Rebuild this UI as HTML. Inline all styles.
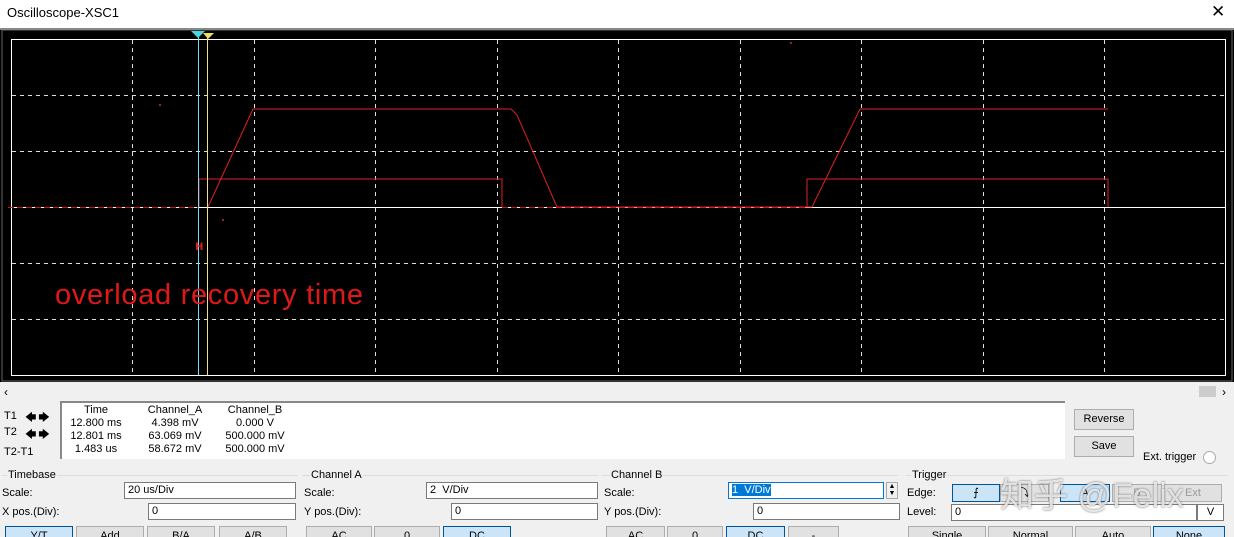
<!DOCTYPE html>
<html style="overflow:hidden;width:1234px;height:537px"><head><style>
body{margin:0;width:1234px;height:537px;background:#f0f0f0;font-family:"Liberation Sans",sans-serif;font-size:11px;color:#000;position:relative;overflow:hidden}
.a{position:absolute}
.in{position:absolute;background:#fff;border:1px solid #7a7a7a;height:17px;box-sizing:border-box;padding:1px 3px;font-size:11px}
.bt{position:absolute;background:#e1e1e1;border:1px solid #adadad;box-sizing:border-box;text-align:center;font-size:11px;line-height:18px}
.sel{background:#cce4f7;border-color:#005499}
.grp{position:absolute;border-top:1px solid #dcdcdc}
</style></head><body>
<div class="a" style="left:0;top:0;width:1234px;height:28px;background:#fff"></div>
<div class="a" style="left:7px;top:5px;font-size:13px">Oscilloscope-XSC1</div>
<div class="a" style="left:1211px;top:2px;font-size:17px">✕</div>
<div class="a" style="left:0;top:28px;width:1234px;height:2px;background:#888"></div>
<svg class="a" style="left:0;top:30px" width="1234" height="352">
<rect x="0" y="0" width="1234" height="352" fill="#000"/>
<rect x="2" y="0" width="1230" height="351" fill="none" stroke="#666"/>
<g transform="translate(0,-30)">
<rect x="11.5" y="39.5" width="1214" height="336" fill="none" stroke="#fff"/>
<g stroke="#ddd" stroke-dasharray="4,4" stroke-width="1">
<path d="M132.5 40V375M254.5 40V375M375.5 40V375M497.5 40V375M618.5 40V375M740.5 40V375M861.5 40V375M983.5 40V375M1104.5 40V375"/>
<path d="M12 95.5H1225M12 151.5H1225M12 263.5H1225M12 319.5H1225"/>
</g>
<path d="M12 207.5H1225" stroke="#fff"/>
<g stroke="#ff0000" stroke-width="1" fill="none">
<path d="M8 207.5H199M502 207.5H807" stroke="#d01010" stroke-dasharray="6,3"/>
<path d="M199 207V179H502V207M807 207V179H1108V207" stroke="#e02020"/>
<path d="M208 207L253 109H511L517 115L557 207H812L860 109H1108" stroke="#e02020"/>
</g>
<line x1="198.5" y1="36" x2="198.5" y2="375" stroke="#6ee0f0"/>
<line x1="207.5" y1="36" x2="207.5" y2="375" stroke="#f0e080"/>
<path d="M191 31H205L198 38Z" fill="#4cd4e0"/>
<path d="M203 33H214L208 39Z" fill="#f0e060"/>
<circle cx="160" cy="105" r="1" fill="#c03030"/>
<circle cx="791" cy="43" r="1" fill="#c03030"/>
<circle cx="223" cy="220" r="1" fill="#c03030"/>
<text x="195" y="250" fill="#e02020" font-size="14" font-weight="bold" font-family="Liberation Sans">ʜ</text>
<text x="55" y="304" fill="#e01818" font-size="29" textLength="308" font-family="Liberation Sans">overload recovery time</text>
</g>
</svg>
<div class="a" style="left:4px;top:385px;font-size:12px">‹</div>
<div class="a" style="left:1199px;top:386px;width:17px;height:11px;background:#cdcdcd"></div>
<div class="a" style="left:1222px;top:385px;font-size:12px">›</div>
<div class="a" style="left:4px;top:410px">T1</div><div class="a" style="left:4px;top:426px">T2</div><div class="a" style="left:4px;top:446px">T2-T1</div>
<div class="a" style="left:25px;top:409px;font-size:11px;letter-spacing:2px">🡄🡆</div>
<div class="a" style="left:25px;top:426px;font-size:11px;letter-spacing:2px">🡄🡆</div>
<div class="a" style="left:60px;top:401px;width:1005px;height:58px;background:#fff;border-top:2px solid #888;border-left:2px solid #888;box-sizing:border-box"></div>
<div class="a" style="left:68px;top:404px;line-height:13px;text-align:center;width:56px">Time<br>12.800 ms<br>12.801 ms<br>1.483 us</div>
<div class="a" style="left:143px;top:404px;line-height:13px;text-align:center;width:64px">Channel_A<br>4.398 mV<br>63.069 mV<br>58.672 mV</div>
<div class="a" style="left:222px;top:404px;line-height:13px;text-align:center;width:66px">Channel_B<br>0.000 V<br>500.000 mV<br>500.000 mV</div>
<div class="bt" style="left:1074px;top:409px;width:60px;height:21px;line-height:19px">Reverse</div>
<div class="bt" style="left:1074px;top:436px;width:60px;height:21px;line-height:19px">Save</div>
<div class="a" style="left:1143px;top:451px">Ext. trigger</div>
<div class="a" style="left:1203px;top:451px;width:11px;height:11px;border:1px solid #aaa;border-radius:50%;background:#fff"></div>
<div class="grp" style="left:2px;top:475px;width:296px"></div><div class="a" style="left:7px;top:469px;background:#f0f0f0;padding:0 1px">Timebase</div>
<div class="a" style="left:2px;top:487px">Scale:</div><div class="in" style="left:124px;top:482px;width:172px">20 us/Div</div>
<div class="a" style="left:2px;top:506px">X pos.(Div):</div><div class="in" style="left:148px;top:503px;width:148px">0</div>
<div class="bt sel" style="left:5px;top:526px;width:68px;height:20px">Y/T</div>
<div class="bt" style="left:76px;top:526px;width:68px;height:20px">Add</div>
<div class="bt" style="left:147px;top:526px;width:68px;height:20px">B/A</div>
<div class="bt" style="left:219px;top:526px;width:68px;height:20px">A/B</div>
<div class="grp" style="left:302px;top:475px;width:296px"></div><div class="a" style="left:310px;top:469px;background:#f0f0f0;padding:0 1px">Channel A</div>
<div class="a" style="left:304px;top:487px">Scale:</div><div class="in" style="left:426px;top:482px;width:172px">2&nbsp; V/Div</div>
<div class="a" style="left:304px;top:506px">Y pos.(Div):</div><div class="in" style="left:451px;top:503px;width:147px">0</div>
<div class="bt" style="left:306px;top:526px;width:66px;height:20px">AC</div>
<div class="bt" style="left:374px;top:526px;width:66px;height:20px">0</div>
<div class="bt sel" style="left:443px;top:526px;width:68px;height:20px">DC</div>
<div class="grp" style="left:602px;top:475px;width:296px"></div><div class="a" style="left:610px;top:469px;background:#f0f0f0;padding:0 1px">Channel B</div>
<div class="a" style="left:604px;top:487px">Scale:</div><div class="in" style="left:728px;top:482px;width:156px;border-color:#0078d7"><span style="background:#0078d7;color:#fff">1&nbsp; V/Div</span></div>
<div class="a" style="left:886px;top:482px;width:12px;height:17px;border:1px solid #aaa;box-sizing:border-box;font-size:7px;line-height:7px;text-align:center">▲<br>▼</div>
<div class="a" style="left:604px;top:506px">Y pos.(Div):</div><div class="in" style="left:753px;top:503px;width:147px">0</div>
<div class="bt" style="left:606px;top:526px;width:59px;height:20px">AC</div>
<div class="bt" style="left:667px;top:526px;width:56px;height:20px">0</div>
<div class="bt sel" style="left:726px;top:526px;width:59px;height:20px">DC</div>
<div class="bt" style="left:788px;top:526px;width:51px;height:20px">-</div>
<div class="grp" style="left:906px;top:475px;width:322px"></div><div class="a" style="left:911px;top:469px;background:#f0f0f0;padding:0 1px">Trigger</div>
<div class="a" style="left:907px;top:487px">Edge:</div>
<div class="bt sel" style="left:952px;top:484px;width:48px;height:18px;line-height:16px">⨍</div>
<div class="bt" style="left:1000px;top:484px;width:49px;height:18px;line-height:16px">⤵</div>
<div class="bt sel" style="left:1060px;top:484px;width:50px;height:18px;line-height:16px">A</div>
<div class="bt" style="left:1112px;top:484px;width:50px;height:18px;line-height:16px;color:#999">B</div>
<div class="bt" style="left:1164px;top:484px;width:58px;height:18px;line-height:16px;color:#999">Ext</div>
<div class="a" style="left:907px;top:506px">Level:</div><div class="in" style="left:951px;top:504px;width:246px">0</div><div class="in" style="left:1197px;top:504px;width:27px;text-align:center">V</div>
<div class="bt" style="left:908px;top:526px;width:78px;height:20px">Single</div>
<div class="bt" style="left:988px;top:526px;width:85px;height:20px">Normal</div>
<div class="bt" style="left:1075px;top:526px;width:76px;height:20px">Auto</div>
<div class="bt sel" style="left:1153px;top:526px;width:72px;height:20px">None</div>
<div class="a" style="left:1000px;top:468px;font-size:34px;color:rgba(255,255,255,0.75);font-family:'Liberation Sans','Noto Sans CJK SC',sans-serif;text-shadow:0 0 2px #666">知乎 @Felix</div>
</body></html>
